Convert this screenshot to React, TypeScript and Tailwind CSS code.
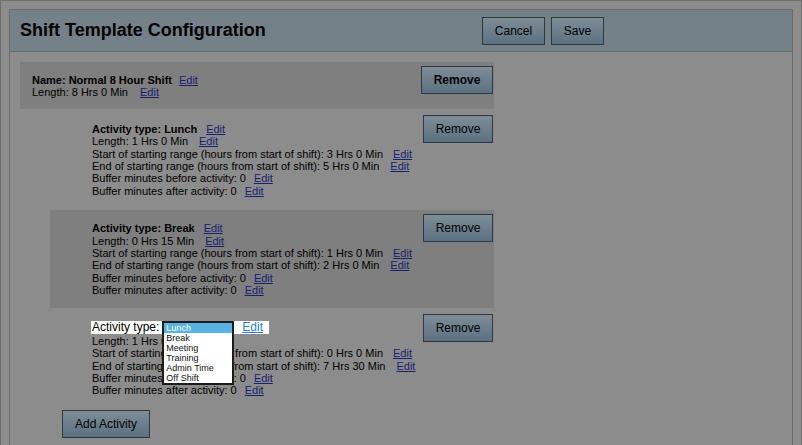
import React from 'react';

type Activity = {
  type: string;
  length: string;
  start: string;
  end: string;
  shaded: boolean;
  editing?: boolean;
};

const activities: Activity[] = [
  { type: 'Lunch', length: '1 Hrs 0 Min', start: '3 Hrs 0 Min', end: '5 Hrs 0 Min', shaded: false },
  { type: 'Break', length: '0 Hrs 15 Min', start: '1 Hrs 0 Min', end: '2 Hrs 0 Min', shaded: true },
  { type: 'Lunch', length: '1 Hrs 0 Min', start: '0 Hrs 0 Min', end: '7 Hrs 30 Min', shaded: false, editing: true },
];

const typeOptions = ['Lunch', 'Break', 'Meeting', 'Training', 'Admin Time', 'Off Shift'];

function Btn({ children, className = '' }: { children: React.ReactNode; className?: string }) {
  return (
    <button
      className={`h-[28px] border border-[#2d3940] bg-linear-to-b from-[#7f8d96] to-[#5b7182] text-[12px] text-black leading-none ${className}`}
    >
      {children}
    </button>
  );
}

function EditLink({ className = '' }: { className?: string }) {
  return <a className={`text-[#18216f] underline underline-offset-1 ${className}`}>Edit</a>;
}

function TypeSelect() {
  return (
    <div className="-ml-px -mt-px mb-px flex h-[13px] w-[178px] items-center bg-white pl-px text-[12px] leading-[13px]">
      <span>Activity type:</span>
      {/* expanded select list */}
      <div className="relative ml-[3px] h-[13px] w-[72px]">
        <div className="absolute left-0 top-0 z-10 w-[72px] border-2 border-[#1c1c1c] bg-white text-[9px] leading-[10px]">
          {typeOptions.map((o, i) => (
            <div key={o} className={i === 0 ? 'bg-[#58b3e3] pl-[2px] text-white' : 'pl-[2px] text-[#111]'}>
              {o}
            </div>
          ))}
        </div>
      </div>
      <a className="ml-[8px] text-[#2b7fcf] underline underline-offset-1">Edit</a>
    </div>
  );
}

function ActivityBlock({ a }: { a: Activity }) {
  return (
    <div className={`ml-[30px] mt-[2px] flex w-[444px] ${a.shaded ? 'bg-[#7f7f7f]' : ''}`}>
      <div className="pb-[11px] pl-[42px] pt-[12px] text-[11px] leading-[12.4px]">
        {a.editing ? (
          <TypeSelect />
        ) : (
          <div>
            <span className="font-bold">Activity type: {a.type}</span>
            <EditLink className="ml-[9px]" />
          </div>
        )}
        <div>
          Length: {a.length}
          <EditLink className="ml-[11px]" />
        </div>
        <div>
          Start of starting range (hours from start of shift): {a.start}
          <EditLink className="ml-[10px]" />
        </div>
        <div>
          End of starting range (hours from start of shift): {a.end}
          <EditLink className="ml-[11px]" />
        </div>
        <div>
          Buffer minutes before activity: 0
          <EditLink className="ml-[8px]" />
        </div>
        <div>
          Buffer minutes after activity: 0
          <EditLink className="ml-[8px]" />
        </div>
      </div>
      <div className="ml-auto pr-[1px] pt-[4px]">
        <Btn className="w-[70px]">Remove</Btn>
      </div>
    </div>
  );
}

export default function App() {
  return (
    <div className="h-[445px] w-[802px] overflow-hidden border-x border-t border-[#6e6e6e] bg-[#8c8c8c] font-['Liberation_Sans',Arial,sans-serif] text-black">
      <div className="ml-[8px] mt-[8px] h-[460px] w-[784px] border border-[#666c70]">
        {/* Header */}
        <div className="flex h-[42px] items-center border-b border-[#666c70] bg-[#748188] pl-[10px]">
          <h1 className="-mt-px w-[462px] text-[18px] font-bold">Shift Template Configuration</h1>
          <div className="flex gap-[6px]">
            <Btn className="w-[63px]">Cancel</Btn>
            <Btn className="w-[53px]">Save</Btn>
          </div>
        </div>

        <div className="px-[10px] pt-[10px]">
          {/* Shift */}
          <div className="flex w-[474px] bg-[#7f7f7f]">
            <div className="pb-[10px] pl-[12px] pt-[12px] text-[11px] leading-[12.4px]">
              <div>
                <span className="font-bold">Name: Normal 8 Hour Shift</span>
                <EditLink className="ml-[7px]" />
              </div>
              <div>
                Length: 8 Hrs 0 Min
                <EditLink className="ml-[12px]" />
              </div>
            </div>
            <div className="ml-auto pr-[1px] pt-[4px]">
              <Btn className="w-[72px] font-bold">Remove</Btn>
            </div>
          </div>

          {activities.map((a, i) => (
            <ActivityBlock key={i} a={a} />
          ))}

          <Btn className="ml-[42px] mt-[2px] w-[88px]">Add Activity</Btn>
        </div>
      </div>
    </div>
  );
}
